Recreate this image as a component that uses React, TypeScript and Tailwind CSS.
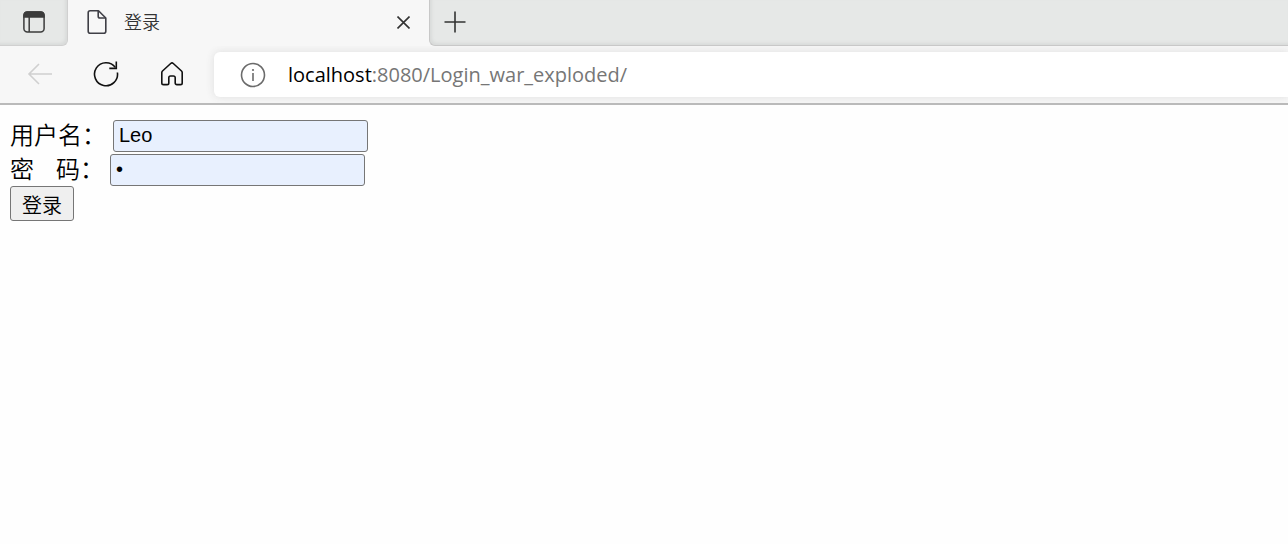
import React, { useState } from "react";

const TabActionsIcon = () => (
    <svg width="22" height="22" viewBox="0 0 22 22" fill="none" stroke="#3b3b3b" strokeWidth="1.5">
        <rect x="0.9" y="0.9" width="20.2" height="20.2" rx="3.5" />
        <path d="M1 4.5C1 2.5 2.5 1 4.5 1h13C19.5 1 21 2.5 21 4.5V6H1z" fill="#3b3b3b" />
        <path d="M6.2 6v15" />
    </svg>
);

const PageIcon = () => (
    <svg width="20" height="24" viewBox="0 0 20 24" fill="none" stroke="#3f3f46" strokeWidth="1.6" strokeLinejoin="round">
        <path d="M11.5 0.8H3.2C2 .8 1.2 1.6 1.2 2.8v18.4c0 1.2.8 2 2 2h13.6c1.2 0 2-.8 2-2V8z" />
        <path d="M11.2 1v5.2c0 1.1.7 1.8 1.8 1.8h5.8" />
    </svg>
);

const BackIcon = () => (
    <svg width="26" height="22" viewBox="0 0 26 22" fill="none" stroke="#d0d0d0" strokeWidth="1.6">
        <path d="M25 11H2M12 1L2 11l10 10" />
    </svg>
);

const RefreshIcon = () => (
    <svg width="26" height="26" viewBox="0 0 26 26" fill="none" stroke="#111" strokeWidth="1.6">
        <path d="M24.4 11.5A11.5 11.5 0 1 1 22.3 6.4" />
        <path d="M23.3 0.6v6.8h-7" />
    </svg>
);

const HomeIcon = () => (
    <svg width="24" height="24" viewBox="0 0 24 24" fill="none" stroke="#111" strokeWidth="1.6" strokeLinejoin="round">
        <path d="M1.8 10.6c0-.7.2-1.1.7-1.6l8.2-7.5c.8-.7 1.8-.7 2.6 0L21.5 9c.5.5.7.9.7 1.6v10.3c0 1-.7 1.7-1.7 1.7h-3.6c-1 0-1.7-.7-1.7-1.7v-5.200c0-1-.7-1.700-1.700-1.700h-3c-1 0-1.700.7-1.700 1.700v5.200c0 1-.7 1.700-1.700 1.700H3.500c-1 0-1.700-.7-1.700-1.700z" />
    </svg>
);

const InfoIcon = () => (
    <svg width="26" height="26" viewBox="0 0 26 26" fill="none" stroke="#6b6b6b" strokeWidth="1.6">
        <circle cx="13" cy="13" r="11.5" />
        <path d="M13 11v8" />
        <circle cx="13" cy="8" r="1.1" fill="#6b6b6b" stroke="none" />
    </svg>
);

const TabStrip: React.FC = () => (
    <div className="flex h-[46px] bg-[#f7f7f7]">
        <div className="flex w-[68px] items-center justify-center rounded-br-md border-r border-b border-[#d0d0d0] bg-[#e6e8e7] pb-[2px] shadow-[inset_-2px_-2px_3px_#d9dbda]">
            <button type="button" aria-label="标签操作菜单">
                <TabActionsIcon />
            </button>
        </div>
        <div className="flex w-[361px] items-center pr-4 pb-[2px] pl-[19px]">
            <PageIcon />
            <span className="ml-[17px] flex-1 pb-[2px] text-lg text-[#333]">登录</span>
            <button type="button" aria-label="关闭标签页" className="p-[3px]">
                <svg width="13" height="13" viewBox="0 0 13 13" stroke="#333" strokeWidth="1.6">
                    <path d="M0.5 0.5l12 12M12.5 0.5l-12 12" />
                </svg>
            </button>
        </div>
        <div className="flex flex-1 items-center rounded-bl-md border-b border-l border-[#c8c8c8] bg-[#e6e8e7] pb-[2px] pl-[14px] shadow-[inset_2px_-2px_3px_#d9dbda]">
            <button type="button" aria-label="新建标签页">
                <svg width="22" height="22" viewBox="0 0 22 22" stroke="#333" strokeWidth="1.6">
                    <path d="M11 0.5v21M0.5 11h21" />
                </svg>
            </button>
        </div>
    </div>
);

const Toolbar: React.FC = () => (
    <div className="flex h-[59px] items-center overflow-hidden border-b-2 border-[#bababa] bg-[#f7f7f7] pl-[27px]">
        <div className="flex items-center pb-[2px]">
            <button type="button" aria-label="返回" disabled>
                <BackIcon />
            </button>
            <button type="button" aria-label="刷新" className="ml-10">
                <RefreshIcon />
            </button>
            <button type="button" aria-label="主页" className="ml-[41px]">
                <HomeIcon />
            </button>
        </div>
        <div className="ml-[30px] flex h-[45px] flex-1 items-center rounded-l-md bg-white pl-[26px] shadow-[0_0_8px_#dedede]">
            <InfoIcon />
            <span className="ml-[22px] font-['Open_Sans','Noto_Sans',sans-serif] text-xl font-normal text-[#767676]">
                <span className="text-black">localhost</span>:8080/Login_war_exploded/
            </span>
        </div>
    </div>
);

const inputClass =
    "h-8 w-[255px] rounded-[3px] border border-[#767676] bg-[#e8f0fe] px-[5px] pb-[2px] font-['Liberation_Sans','Noto_Sans_CJK_SC',sans-serif] text-xl font-normal text-black";

const LoginForm: React.FC = () => {
    const [username, setUsername] = useState("Leo");
    const [password, setPassword] = useState("1");

    return (
        <form className="px-[10px] pt-[15px] text-2xl text-black" onSubmit={(e) => e.preventDefault()}>
            <div className="mb-[2px] flex h-8 items-center gap-[7px]">
                <label htmlFor="username" className="pb-1">用户名：</label>
                <input
                    id="username"
                    type="text"
                    className={inputClass}
                    value={username}
                    onChange={(e) => setUsername(e.target.value)}
                />
            </div>
            <div className="flex h-8 items-center gap-[6px]">
                <label htmlFor="password" className="flex gap-[22px] pb-1">
                    <span>密</span>
                    <span>码：</span>
                </label>
                <input
                    id="password"
                    type="password"
                    className={inputClass}
                    value={password}
                    onChange={(e) => setPassword(e.target.value)}
                />
            </div>
            <button type="submit" className="block h-[35px] w-16 rounded-[3px] border border-[#767676] bg-[#efefef] pt-[2px] text-xl">
                登录
            </button>
        </form>
    );
};

const App: React.FC = () => {
    return (
        <div lang="zh-CN" className="min-h-screen bg-[#fefefe] font-['Noto_Sans_CJK_SC',sans-serif] font-[350]">
            <TabStrip />
            <Toolbar />
            <LoginForm />
        </div>
    );
};

export default App;
